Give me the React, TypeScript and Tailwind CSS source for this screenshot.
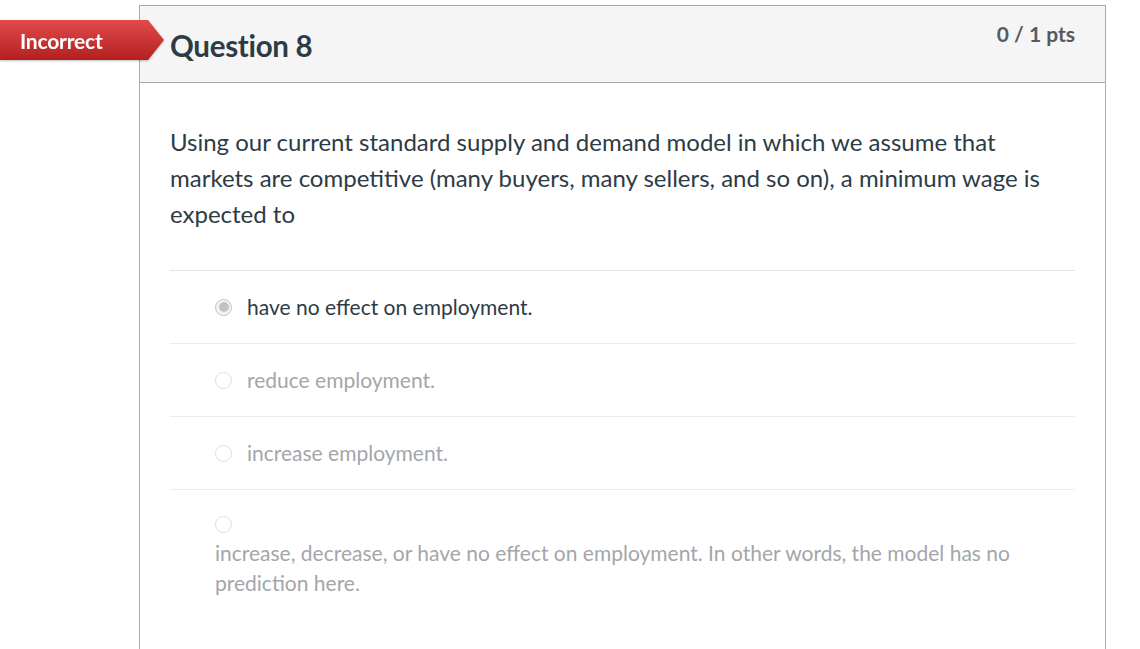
import React from "react";

// ─── Data ───────────────────────────────────────────────────────

const ANSWERS = [
  { id: "a", text: "have no effect on employment.", selected: true },
  { id: "b", text: "reduce employment.", selected: false },
  { id: "c", text: "increase employment.", selected: false },
];

const LONG_ANSWER =
  "increase, decrease, or have no effect on employment. In other words, the model has no prediction here.";

// ─── Pieces ─────────────────────────────────────────────────────

function Radio({ selected }: { selected: boolean }) {
  return (
    <span
      className={`w-[17px] h-[17px] rounded-full shrink-0 flex items-center justify-center border ${
        selected ? "border-[#c4c4c4] bg-[#f3f3f3]" : "border-[#dedede] bg-white"
      }`}
    >
      {selected && <span className="w-[10px] h-[10px] rounded-full bg-[#c2c2c2]" />}
    </span>
  );
}

function IncorrectBadge() {
  return (
    <div className="absolute left-0 top-[20px] h-10 flex drop-shadow-[0_1px_1px_rgba(0,0,0,0.25)]">
      <div className="w-[148px] h-10 bg-gradient-to-b from-[#e24a4a] to-[#b31f1f] flex items-center pl-5">
        <span className="text-white font-bold text-[21px] leading-none tracking-[-0.2px]">Incorrect</span>
      </div>
      <div className="w-[16px] h-10 bg-gradient-to-b from-[#e24a4a] to-[#b31f1f] [clip-path:polygon(0_0,100%_50%,0_100%)]" />
    </div>
  );
}

// ─── App ────────────────────────────────────────────────────────

export default function App() {
  return (
    <div className="relative w-[1140px] h-[649px] overflow-hidden bg-white font-['Lato','Noto_Sans',sans-serif] text-[#2d3b45]">
      <IncorrectBadge />

      <div className="ml-[139px] mt-[5px] w-[967px] border border-[#a9a9a9] border-b-0 min-h-[700px]">
        {/* Header */}
        <div className="h-[77px] bg-[#f5f5f5] border-b border-[#a9a9a9] flex justify-between pl-[30px] pr-[30px]">
          <h2 className="pt-[22px] text-[29.5px] font-bold leading-[36px] tracking-[-0.3px]">Question 8</h2>
          <span className="pt-[14px] text-[21px] font-bold leading-[28px] text-[#555a60]">0 / 1 pts</span>
        </div>

        {/* Body */}
        <div className="pl-[30px] pr-[30px] pt-[41px]">
          <p className="text-[24px] leading-[36px] pb-[38px] border-b border-[#e2e2e2]">
            Using our current standard supply and demand model in which we assume that markets are competitive
            (many buyers, many sellers, and so on), a minimum wage is expected to
          </p>

          {ANSWERS.map((a) => (
            <div key={a.id} className="h-[73px] border-b border-[#ececec] flex items-center pl-[45px] gap-[15px]">
              <Radio selected={a.selected} />
              <span className={`text-[21px] ${a.selected ? "text-[#2d3b45]" : "text-[#a3a6aa]"}`}>{a.text}</span>
            </div>
          ))}

          <div className="pl-[45px] pt-[26px]">
            <Radio selected={false} />
            <p className="mt-[5px] text-[21px] leading-[30px] text-[#a3a6aa]">{LONG_ANSWER}</p>
          </div>
        </div>
      </div>
    </div>
  );
}
